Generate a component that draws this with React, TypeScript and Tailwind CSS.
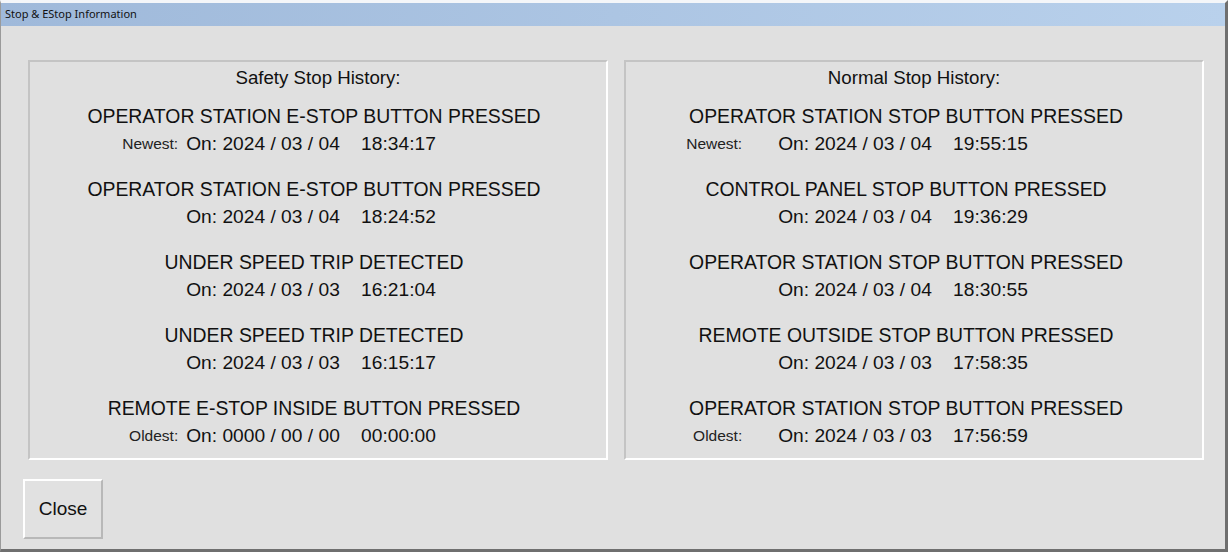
import React from "react";

type StopEvent = {
  text: string;
  date: string;
  label?: string;
};

const safetyStops: StopEvent[] = [
  { text: "OPERATOR STATION E-STOP BUTTON PRESSED", date: "On: 2024 / 03 / 04    18:34:17", label: "Newest:" },
  { text: "OPERATOR STATION E-STOP BUTTON PRESSED", date: "On: 2024 / 03 / 04    18:24:52" },
  { text: "UNDER SPEED TRIP DETECTED", date: "On: 2024 / 03 / 03    16:21:04" },
  { text: "UNDER SPEED TRIP DETECTED", date: "On: 2024 / 03 / 03    16:15:17" },
  { text: "REMOTE E-STOP INSIDE BUTTON PRESSED", date: "On: 0000 / 00 / 00    00:00:00", label: "Oldest:" },
];

const normalStops: StopEvent[] = [
  { text: "OPERATOR STATION STOP BUTTON PRESSED", date: "On: 2024 / 03 / 04    19:55:15", label: "Newest:" },
  { text: "CONTROL PANEL STOP BUTTON PRESSED", date: "On: 2024 / 03 / 04    19:36:29" },
  { text: "OPERATOR STATION STOP BUTTON PRESSED", date: "On: 2024 / 03 / 04    18:30:55" },
  { text: "REMOTE OUTSIDE STOP BUTTON PRESSED", date: "On: 2024 / 03 / 03    17:58:35" },
  { text: "OPERATOR STATION STOP BUTTON PRESSED", date: "On: 2024 / 03 / 03    17:56:59", label: "Oldest:" },
];

function HistoryPanel({
  title,
  events,
  labelGap,
  textShift,
  dateShift,
}: {
  title: string;
  events: StopEvent[];
  labelGap: string;
  textShift: string;
  dateShift: string;
}) {
  return (
    <div className="w-[580px] h-[400px] border-2 border-t-[#c4c4c4] border-l-[#c4c4c4] border-r-white border-b-white flex flex-col">
      <div className="h-[24px] leading-[24px] mt-[4px] text-center text-[18.7px] text-[#111]">{title}</div>
      <div className="flex flex-col gap-[17px] mt-[12px]">
        {events.map((ev, i) => (
          <div key={i} className="flex flex-col">
            <div className={`h-[28px] leading-[28px] text-center text-[19.4px] text-[#111] whitespace-pre ${textShift}`}>
              {ev.text}
            </div>
            <div className={`h-[28px] grid grid-cols-[1fr_auto_1fr] items-center ${dateShift}`}>
              <span className={`justify-self-end text-[15.5px] text-[#222] ${labelGap}`}>{ev.label ?? ""}</span>
              <span className="text-[19.2px] leading-[28px] text-[#111] whitespace-pre">{ev.date}</span>
              <span />
            </div>
          </div>
        ))}
      </div>
    </div>
  );
}

export default function App() {
  return (
    <div
      className="w-[1228px] h-[552px] bg-[#e0e0e0] flex flex-col border-l border-l-[#9a9a9a] border-r-[3px] border-r-[#6f6f6f] border-b-[3px] border-b-[#6f6f6f] border-t-[3px] border-t-[#f4f6f9]"
      style={{ fontFamily: '"Liberation Sans", Arial, sans-serif' }}
    >
      {/* title bar */}
      <div className="h-[23px] flex items-center px-[4px] bg-gradient-to-r from-[#9fb9da] to-[#b9d1ec]">
        <span className="text-[11px] text-[#111]" style={{ fontFamily: '"Noto Sans", "DejaVu Sans", sans-serif' }}>
          Stop &amp; EStop Information
        </span>
      </div>

      <div className="flex-1 flex flex-col pl-[27px] pt-[34px]">
        <div className="flex gap-[16px]">
          <HistoryPanel
            title="Safety Stop History:"
            events={safetyStops}
            labelGap="mr-[8px]"
            textShift="pr-[8px]"
            dateShift="pr-[14px]"
          />
          <HistoryPanel
            title="Normal Stop History:"
            events={normalStops}
            labelGap="mr-[36px]"
            textShift="pr-[16px]"
            dateShift="pr-[22px]"
          />
        </div>

        <button className="mt-[19px] -ml-[5px] w-[80px] h-[60px] bg-[#e1e1e1] border-2 border-t-white border-l-white border-r-[#b8b8b8] border-b-[#b8b8b8] text-[19px] text-[#111]">
          Close
        </button>
      </div>
    </div>
  );
}
